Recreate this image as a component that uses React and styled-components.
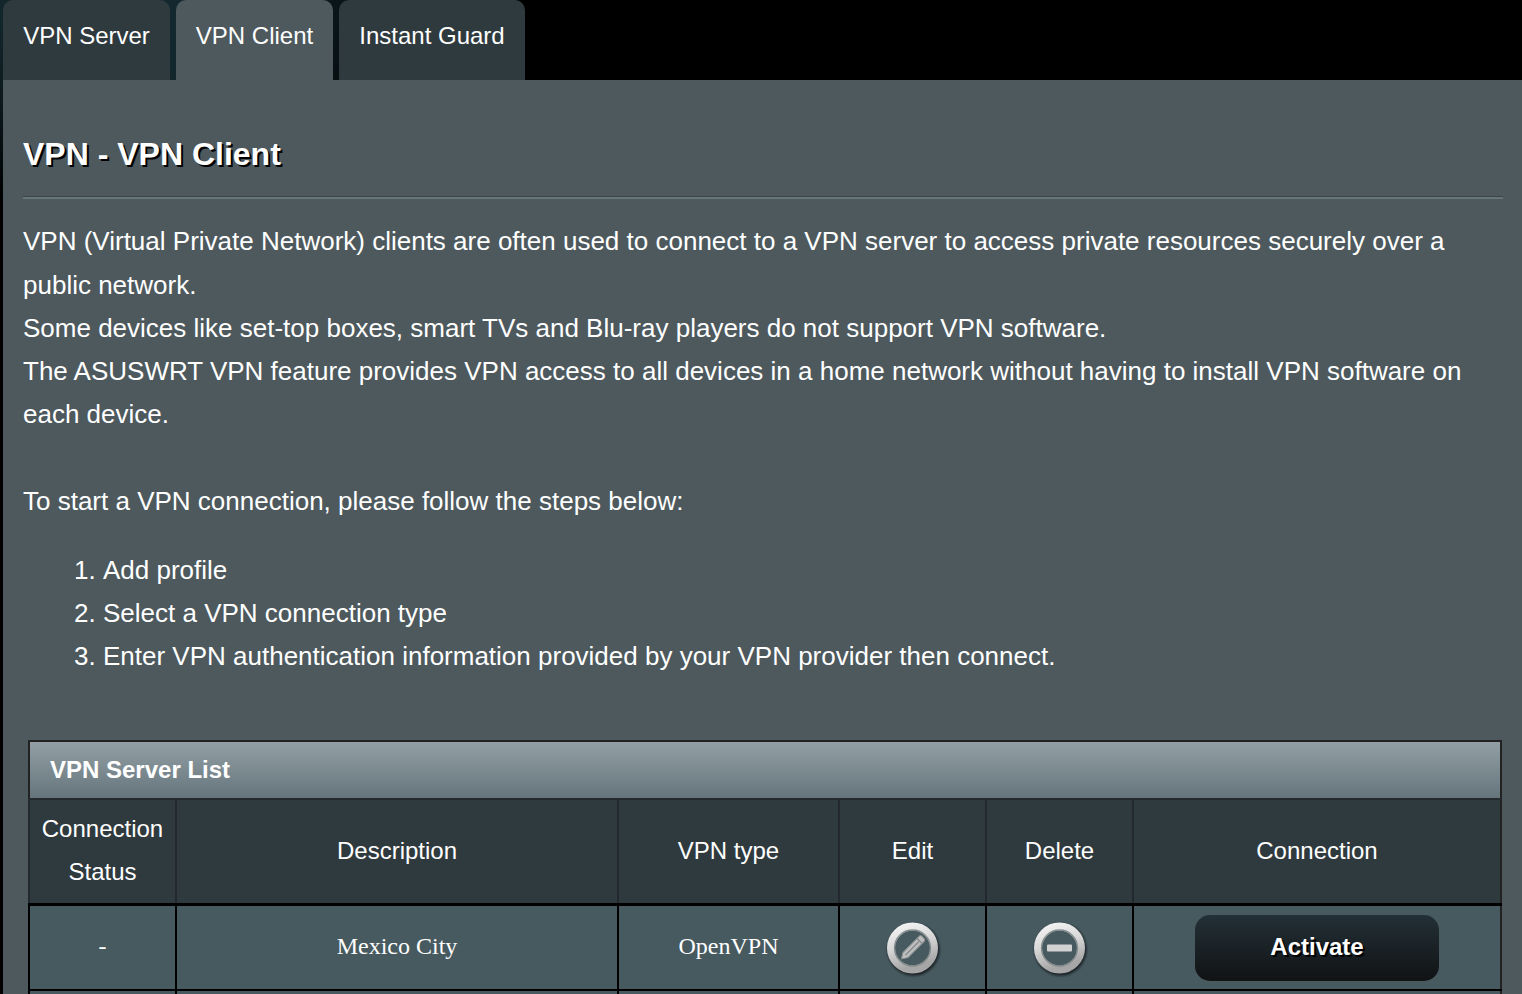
import React from "react";
import styled, { createGlobalStyle } from "styled-components";

const Global = createGlobalStyle`
  html, body {
    margin: 0;
    padding: 0;
    height: 100%;
    overflow: hidden;
    background: #000;
  }
  body {
    font-family: "Liberation Sans", Arial, sans-serif;
    color: #fff;
  }
`;

const Page = styled.div`
  height: 994px;
  overflow: hidden;
  padding-left: 3px;
  background: radial-gradient(ellipse 360px 260px at 130px 0, #142a30 0, #12262c 35%, #000 85%) no-repeat #000;
`;

const Tabs = styled.div`
  display: flex;
  gap: 6px;
  height: 80px;
`;

const Tab = styled.div`
  width: ${({ $w }) => $w}px;
  height: 80px;
  box-sizing: border-box;
  padding-top: 21px;
  text-align: center;
  font-size: 24px;
  line-height: 30px;
  color: #fff;
  border-radius: 10px 10px 0 0;
  background: ${({ $active }) => ($active ? "#4d595d" : "#2f3a3e")};
`;

const Panel = styled.div`
  background: #4d595d;
  height: 914px;
  padding: 0 19px 0 20px;
`;

const Title = styled.h1`
  margin: 0;
  padding-top: 54px;
  font-size: 32px;
  line-height: 40px;
  font-weight: 700;
  text-shadow: 2px 2px 0 #000;
`;

const Rule = styled.div`
  height: 3px;
  margin-top: 22px;
  background: linear-gradient(to bottom, #394549 40%, #66757a 40%);
`;

const Copy = styled.div`
  margin-top: 21.4px;
  font-size: 26px;
  line-height: 43.2px;
`;

const Gap = styled.div`
  height: ${({ $h }) => $h}px;
`;

const Steps = styled.ol`
  margin: 26px 0 0;
  padding: 0 0 0 80px;
  font-size: 26px;
  line-height: 43.2px;
`;

const Table = styled.table`
  margin: 61px 0 0 5px;
  width: 1474px;
  table-layout: fixed;
  border-collapse: collapse;
  border: 2px solid #222;
  font-size: 24px;
`;

const Caption = styled.th`
  height: 56px;
  padding: 0 0 0 20px;
  text-align: left;
  font-size: 24px;
  font-weight: 700;
  color: #fff;
  background: linear-gradient(to bottom, #92a0a5 0%, #66757c 100%);
  border-bottom: 2px solid #23292c;
`;

const Head = styled.th`
  height: 102px;
  padding: 0 0 1px;
  font-weight: 400;
  line-height: 43px;
  background: #2f3a3e;
  border-left: 2px solid #23292c;
  border-bottom: 3px solid #000;
`;

const StatusHead = styled(Head)`
  height: 100px;
  padding-bottom: 3px;
`;

const Cell = styled.td`
  height: 83px;
  padding: 0;
  text-align: center;
  font-family: "Liberation Serif", "Times New Roman", serif;
  background: #475a5f;
  border-left: 2px solid #000;
  border-bottom: 2px solid #000;
`;

const TextCell = styled(Cell)`
  height: 81px;
  padding-bottom: 2px;
`;

const Activate = styled.button`
  display: block;
  box-sizing: border-box;
  width: 244px;
  height: 66px;
  margin: 2px auto 0;
  padding: 0 0 2px;
  border: 0;
  border-radius: 15px;
  color: #fff;
  font: 700 24px "Liberation Sans", Arial, sans-serif;
  text-shadow: 2px 2px 0 #000;
  background: linear-gradient(to bottom, #233037 0%, #111314 100%);
`;

const IconWrap = styled.svg`
  display: block;
  width: 60px;
  height: 60px;
  margin: 1px auto 0;
`;

function RoundIcon({ id, children }) {
  return (
    <IconWrap viewBox="0.5 0 60 60">
      <defs>
        <linearGradient id={id} x1="0" y1="0" x2="0.3" y2="1">
          <stop offset="0" stopColor="#f4f4f4" />
          <stop offset="0.5" stopColor="#d6d6d6" />
          <stop offset="1" stopColor="#a6a6a6" />
        </linearGradient>
        <filter id={id + "s"} x="-20%" y="-20%" width="140%" height="140%">
          <feGaussianBlur stdDeviation="0.7" />
        </filter>
        <filter id={id + "b"} x="-20%" y="-20%" width="140%" height="140%">
          <feGaussianBlur stdDeviation="1.3" />
        </filter>
      </defs>
      <circle cx="31" cy="31.5" r="22.5" fill="none" stroke="#161d20" strokeWidth="7" opacity="0.9" filter={`url(#${id}b)`} />
      <g filter={`url(#${id}s)`}>
        <circle cx="30" cy="30" r="21.5" fill="#475a5f" stroke={`url(#${id})`} strokeWidth="8" />
        <circle cx="30" cy="30" r="18" fill="none" stroke="#7f8789" strokeWidth="1.4" opacity="0.9" />
        {children}
      </g>
    </IconWrap>
  );
}

export default function App() {
  return (
    <Page>
      <Global />
      <Tabs>
        <Tab $w={167}>VPN Server</Tab>
        <Tab $w={157} $active>VPN Client</Tab>
        <Tab $w={186}>Instant Guard</Tab>
      </Tabs>
      <Panel>
        <Title>VPN - VPN Client</Title>
        <Rule />
        <Copy>
          VPN (Virtual Private Network) clients are often used to connect to a VPN server to access private resources securely over a public network.
          <br />
          Some devices like set-top boxes, smart TVs and Blu-ray players do not support VPN software.
          <br />
          The ASUSWRT VPN feature provides VPN access to all devices in a home network without having to install VPN software on each device.
          <Gap $h={43.4} />
          To start a VPN connection, please follow the steps below:
        </Copy>
        <Steps>
          <li>Add profile</li>
          <li>Select a VPN connection type</li>
          <li>Enter VPN authentication information provided by your VPN provider then connect.</li>
        </Steps>
        <Table>
          <colgroup>
            <col width="147" />
            <col width="442" />
            <col width="221" />
            <col width="147" />
            <col width="147" />
            <col />
          </colgroup>
          <thead>
            <tr>
              <Caption colSpan={6}>VPN Server List</Caption>
            </tr>
            <tr>
              <StatusHead>Connection<br />Status</StatusHead>
              <Head>Description</Head>
              <Head>VPN type</Head>
              <Head>Edit</Head>
              <Head>Delete</Head>
              <Head>Connection</Head>
            </tr>
          </thead>
          <tbody>
            <tr>
              <TextCell>-</TextCell>
              <TextCell>Mexico City</TextCell>
              <TextCell>OpenVPN</TextCell>
              <Cell>
                <RoundIcon id="edit">
                  <g transform="rotate(-45 30 30)">
                    <path d="M14.5 30 l5.5 -3.6 h23 a2 2 0 0 1 2 2 v3.2 a2 2 0 0 1 -2 2 h-23 z" fill="#bdbdbd" stroke="#8c9092" strokeWidth="1" />
                    <path d="M20 30 h19 M40 26.5 v7" stroke="#7f8587" strokeWidth="1.2" fill="none" />
                  </g>
                </RoundIcon>
              </Cell>
              <Cell>
                <RoundIcon id="del">
                  <rect x="17.5" y="26.5" width="25" height="7" rx="1" fill="#d2d2d2" />
                </RoundIcon>
              </Cell>
              <Cell>
                <Activate>Activate</Activate>
              </Cell>
            </tr>
            <tr>
              <Cell />
              <Cell />
              <Cell />
              <Cell />
              <Cell />
              <Cell />
            </tr>
          </tbody>
        </Table>
      </Panel>
    </Page>
  );
}
